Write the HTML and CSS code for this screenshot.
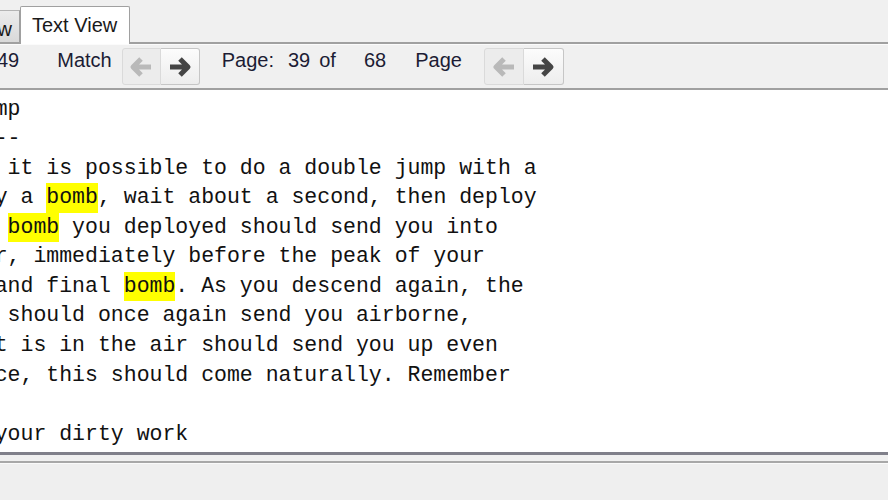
FILE: index.html
```html
<!DOCTYPE html>
<html lang="en">
<head>
    <meta charset="UTF-8">
    <title>Text View</title>
    <link rel="stylesheet" href="styles.css">
</head>
<body>
    <div class="window">
        <div class="tabs">
            <div class="tab tab-cut">w</div>
            <div class="tab tab-active">Text View</div>
        </div>

        <div class="toolbar">
            <span class="label count">49</span>
            <span class="label match">Match</span>
            <div class="nav nav-match">
                <button class="nav-btn" disabled>
                    <svg width="26" height="22" viewBox="0 0 26 22"><path d="M23 11 H5 M13 3 L5 11 L13 19" /></svg>
                </button>
                <button class="nav-btn">
                    <svg width="26" height="22" viewBox="0 0 26 22"><path d="M3 11 H21 M13 3 L21 11 L13 19" /></svg>
                </button>
            </div>
            <span class="label page">Page:</span>
            <span class="label cur">39</span>
            <span class="label of">of</span>
            <span class="label total">68</span>
            <span class="label page2">Page</span>
            <div class="nav nav-page">
                <button class="nav-btn" disabled>
                    <svg width="26" height="22" viewBox="0 0 26 22"><path d="M23 11 H5 M13 3 L5 11 L13 19" /></svg>
                </button>
                <button class="nav-btn">
                    <svg width="26" height="22" viewBox="0 0 26 22"><path d="M3 11 H21 M13 3 L21 11 L13 19" /></svg>
                </button>
            </div>
        </div>

        <div class="text-view">
<pre class="text">mp
--
 it is possible to do a double jump with a
y a <span class="hit">bomb</span>, wait about a second, then deploy
 <span class="hit">bomb</span> you deployed should send you into
r, immediately before the peak of your
and final <span class="hit">bomb</span>. As you descend again, the
 should once again send you airborne,
t is in the air should send you up even
ce, this should come naturally. Remember

your dirty work</pre>
        </div>

        <div class="status"></div>
    </div>
</body>
</html>
```

FILE: styles.css
```css
/* Base */
body {
    margin: 0;
    background-color: #f0f0f0;
    font-family: 'Liberation Sans', Arial, sans-serif;
    overflow: hidden;
}

.window {
    width: 888px;
    height: 500px;
    display: flex;
    flex-direction: column;
}

/* Tabs */
.tabs {
    height: 42px;
    display: flex;
    align-items: flex-end;
    border-bottom: 2px solid #a0a0a0;
    flex-shrink: 0;
}

.tab {
    font-size: 20px;
    line-height: 23px;
    color: #1a1a1a;
    white-space: nowrap;
    box-sizing: border-box;
}

.tab-cut {
    width: 20px;
    height: 32px;
    display: flex;
    justify-content: flex-end;
    overflow: hidden;
    padding: 7px 7px 0 0;
    border-top: 1px solid #b4b4b4;
    border-right: 1px solid #a0a0a0;
    background: linear-gradient(#ececec, #d9d9d9);
}

.tab-active {
    width: 110px;
    height: 39px;
    margin-bottom: -3px;
    padding: 7px 0 0 11px;
    background-color: #fff;
    border: 1px solid #a0a0a0;
    border-bottom: none;
    border-radius: 2px 2px 0 0;
}

/* Toolbar */
.toolbar {
    display: flex;
    align-items: flex-start;
    padding-top: 3px;
    height: 40px;
    border-top: 1px solid #fbfbfb;
    border-bottom: 2px solid #a0a0a0;
    flex-shrink: 0;
}

.label {
    font-size: 20px;
    line-height: 23px;
    margin-top: 1px;
    color: #1c1c34;
    white-space: nowrap;
}

.count { margin-left: -3px; }
.match { margin-left: 38px; }
.page { margin-left: 22px; }
.cur { margin-left: 14px; }
.of { margin-left: 9px; }
.total { margin-left: 28px; }
.page2 { margin-left: 29px; }

.nav {
    display: flex;
}

.nav-match { margin-left: 10px; }
.nav-page { margin-left: 22px; }

.nav-btn {
    width: 39px;
    height: 37px;
    padding: 0;
    margin: 0;
    display: flex;
    align-items: center;
    justify-content: center;
    border: 1px solid #c6c6c6;
    background: linear-gradient(#fcfcfc, #ededed);
    box-sizing: border-box;
}

.nav-page .nav-btn {
    width: 40px;
}

.nav-btn:first-child {
    border-radius: 3px 0 0 3px;
}

.nav-btn:last-child {
    border-radius: 0 3px 3px 0;
    border-left: none;
}

.nav-btn:disabled {
    background: #ececec;
    border-color: #dadada;
}

.nav-btn svg path {
    fill: none;
    stroke: #454545;
    stroke-width: 5;
    stroke-linejoin: round;
}

.nav-btn:disabled svg path {
    stroke: #b9b9b9;
}

/* Text area */
.text-view {
    height: 362px;
    background-color: #fff;
    overflow: hidden;
    flex-shrink: 0;
}

.text {
    margin: 4.5px 0 0 -5.3px;
    font-family: 'Liberation Mono', 'Courier New', monospace;
    font-size: 21.5px;
    line-height: 29.56px;
    color: #111;
}

.hit {
    display: inline-block;
    background-color: #ffff00;
}

/* Status strip */
.status {
    flex-grow: 1;
    border-top: 3px solid #80808a;
    background: linear-gradient(#f0f0f0 0, #f0f0f0 6px, #a8a8a8 6px, #a8a8a8 8px, #fafafa 8px, #fafafa 9px, #efefef 9px);
}
```
